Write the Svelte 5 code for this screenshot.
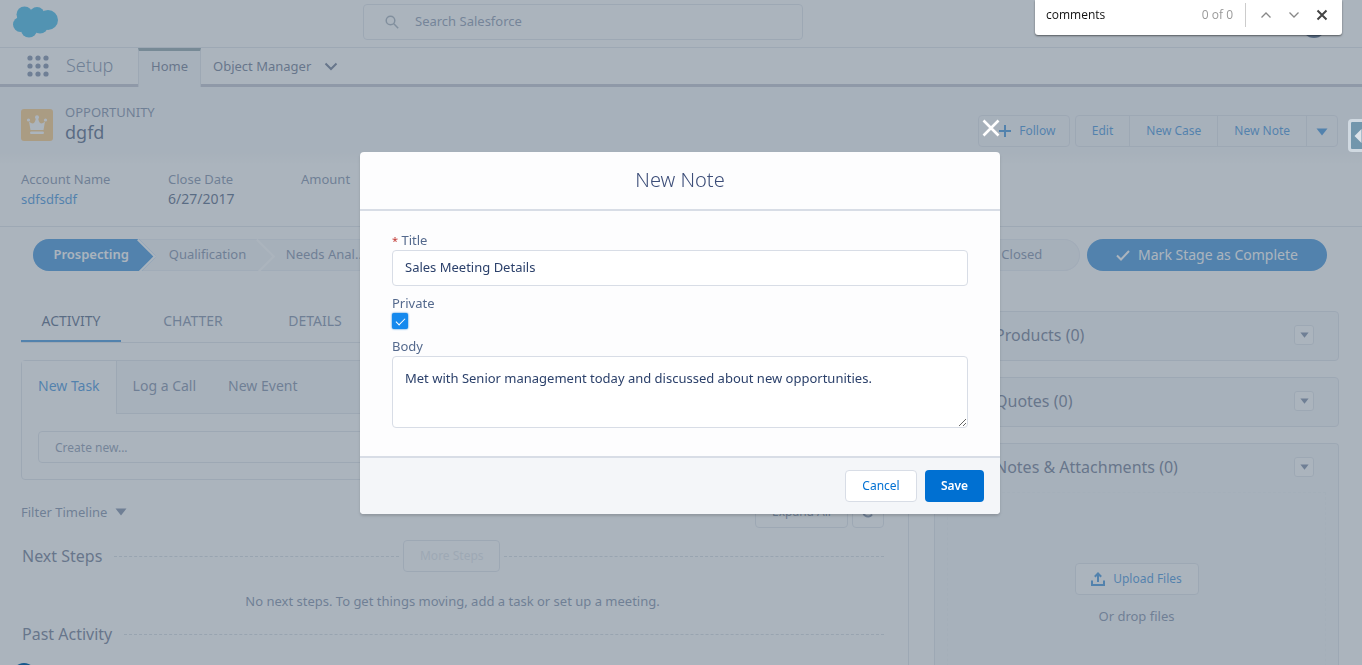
<script>
  let title = $state('Sales Meeting Details');
  let isPrivate = $state(true);
  let body = $state('Met with Senior management today and discussed about new opportunities.');
  let findText = $state('comments');

  const fields = [
    { label: 'Account Name', value: 'sdfsdfsdf', link: true },
    { label: 'Close Date', value: '6/27/2017' },
    { label: 'Amount', value: '' }
  ];
  const related = ['Products (0)', 'Quotes (0)'];
</script>

{#snippet caret()}
  <svg class="caret" viewBox="0 0 12 8" aria-hidden="true"><path d="M0.5 0.5h11L6 7.5z" /></svg>
{/snippet}

<div class="app">
  <header class="global">
    <svg class="logo" viewBox="0 0 46 32" aria-hidden="true">
      <g fill="#00a1e0">
        <circle cx="12.500" cy="8.500" r="8" /><circle cx="25" cy="8.500" r="7.500" /><circle cx="36" cy="14" r="10" />
        <circle cx="8.500" cy="18.500" r="7.500" /><circle cx="17" cy="23.500" r="8" /><circle cx="28" cy="19.500" r="8" />
        <rect x="9" y="9" width="24" height="14" />
      </g>
    </svg>
    <div class="search">
      <svg viewBox="0 0 14 14" aria-hidden="true"><circle cx="5.5" cy="5.5" r="4.3" /><path d="M8.8 8.8l4.4 4.4" /></svg>
      <input type="search" placeholder="Search Salesforce" aria-label="Search Salesforce" />
    </div>
    <span class="avatar"></span>
  </header>

  <nav class="bar">
    <button class="waffle" aria-label="App Launcher">
      <svg viewBox="0 0 22 22" aria-hidden="true">
        {#each [3, 11, 19] as y}{#each [3, 11, 19] as x}<circle cx={x} cy={y} r="2.6" />{/each}{/each}
      </svg>
    </button>
    <span class="appname">Setup</span>
    <a class="tab current" href="#home">Home</a>
    <a class="tab" href="#objects">Object Manager
      <svg viewBox="0 0 14 9" aria-hidden="true"><path d="M1.5 1.5L7 7l5.5-5.5" /></svg>
    </a>
  </nav>

  <section class="record">
    <div class="record-top">
      <span class="crown">
        <svg viewBox="0 0 22 20" aria-hidden="true">
          <path d="M3 6.5c2 2 4 2.500 5 1.500s1.500-3 2-5h2c.5 2 1 4 2 5s3 .5 5-1.500L17.500 15h-13z" />
          <circle cx="2.500" cy="5" r="1.600" /><circle cx="11" cy="2.300" r="2" /><circle cx="19.500" cy="5" r="1.600" />
          <rect x="4" y="16.500" width="14" height="2.500" rx="1.200" />
        </svg>
      </span>
      <div class="names">
        <p>OPPORTUNITY</p>
        <h1>dgfd</h1>
      </div>
      <div class="actions">
        <button class="btn follow"><svg viewBox="0 0 12 12" aria-hidden="true"><path d="M6 0v12M0 6h12" /></svg>Follow</button>
        <div class="group">
          <button>Edit</button><button>New Case</button><button>New Note</button>
          <button class="more" aria-label="More actions">{@render caret()}</button>
        </div>
      </div>
    </div>
    <dl>
      {#each fields as f}
        <div>
          <dt>{f.label}</dt>
          <dd>{#if f.link}<a href="#account">{f.value}</a>{:else}{f.value}{/if}</dd>
        </div>
      {/each}
    </dl>
  </section>

  <section class="path">
    <ol>
      <li class="active"><span>Prospecting</span></li>
      <li><span>Qualification</span></li>
      <li><span>Needs Anal..</span></li>
      <li class="rest"></li>
      <li class="last"><span>Closed</span></li>
    </ol>
    <button class="complete">
      <svg viewBox="0 0 14 11" aria-hidden="true"><path d="M1 5.500l4 4L13 1" /></svg>Mark Stage as Complete
    </button>
  </section>

  <main>
    <div class="left">
      <div class="tabs">
        <button class="on">ACTIVITY</button><button>CHATTER</button><button>DETAILS</button>
      </div>
      <div class="composer">
        <div class="kinds">
          <button class="on">New Task</button><button>Log a Call</button><button>New Event</button>
        </div>
        <input class="create" placeholder="Create new..." aria-label="Create new" />
      </div>
      <div class="filter">
        <button class="plain">Filter Timeline {@render caret()}</button>
        <button class="btn expand">Expand All</button>
        <button class="btn refresh" aria-label="Refresh">
          <svg viewBox="0 0 14 14" aria-hidden="true"><path d="M10.500 3.500A4.800 4.800 0 1 0 11 9.500M11.500 1v3.400H8.200" /></svg>
        </button>
      </div>
      <div class="line steps">
        <h2>Next Steps</h2><hr /><button class="btn dim" disabled>More Steps</button><hr />
      </div>
      <p class="none">No next steps. To get things moving, add a task or set up a meeting.</p>
      <div class="line"><h2>Past Activity</h2><hr /></div>
    </div>

    <aside>
      {#each related as name}
        <section class="card"><header><h2>{name}</h2><button aria-label="Actions">{@render caret()}</button></header></section>
      {/each}
      <section class="card files">
        <header><h2>Notes &amp; Attachments (0)</h2><button aria-label="Actions">{@render caret()}</button></header>
        <div class="drop">
          <button class="btn upload">
            <svg viewBox="0 0 14 14" aria-hidden="true"><path d="M7 10V2M3.800 4.800L7 1.500l3.200 3.300M1 8.500V13h12V8.500" /></svg>Upload Files
          </button>
          <p>Or drop files</p>
        </div>
      </section>
    </aside>
  </main>
</div>

<div class="backdrop">
  <div class="modal" role="dialog" aria-modal="true" aria-labelledby="modal-title">
    <button class="close" aria-label="Close"><svg viewBox="0 0 18 18" aria-hidden="true"><path d="M1.500 1.500l15 15M16.500 1.500l-15 15" /></svg></button>
    <header><h2 id="modal-title">New Note</h2></header>
    <form>
      <label for="note-title"><abbr>*</abbr> Title</label>
      <input id="note-title" class="text" bind:value={title} />
      <label for="note-private" class="gap">Private</label>
      <input id="note-private" type="checkbox" bind:checked={isPrivate} />
      <label for="note-body" class="gap">Body</label>
      <textarea id="note-body" bind:value={body}></textarea>
    </form>
    <footer><button class="cancel">Cancel</button><button class="save">Save</button></footer>
  </div>
</div>

<button class="side" aria-label="Open panel"><svg viewBox="0 0 10 26" aria-hidden="true"><path d="M10 6L3 13l7 7z" /></svg></button>
<span class="presence"></span>

<div class="find">
  <input bind:value={findText} aria-label="Find in page" />
  <span class="count">0 of 0</span>
  <button aria-label="Previous"><svg viewBox="0 0 12 12"><path d="M1.500 8.500L6 4l4.500 4.500" /></svg></button>
  <button aria-label="Next"><svg viewBox="0 0 12 12"><path d="M1.500 3.500L6 8l4.500-4.500" /></svg></button>
  <button class="x" aria-label="Close find bar"><svg viewBox="0 0 12 12"><path d="M1.500 1.500l9 9M10.500 1.500l-9 9" /></svg></button>
</div>

<style>
  :global(body) { overflow: hidden; font: 13px/20px "Noto Sans", "Open Sans", sans-serif; }
  * { box-sizing: border-box; }
  h1, h2, p, dl, dd, ol { margin: 0; padding: 0; font-weight: 400; }
  button, input, textarea { font: inherit; color: inherit; margin: 0; }
  button { background: none; border: 0; padding: 0; white-space: nowrap; }
  a { text-decoration: none; }
  svg { fill: none; stroke: currentColor; display: block; flex: none; }
  .caret { width: 12px; height: 8px; fill: currentColor; stroke: none; }

  .app { height: 100vh; overflow: hidden; isolation: isolate; background: #fff; color: #54698d; display: flex; flex-direction: column; }
  .global { display: grid; grid-template-columns: 339px minmax(200px, 440px) 1fr; align-items: start; height: 48px; flex: none; padding: 4px 36px 0 12px; column-gap: 12px; border-bottom: 1px solid #d8dde6; }
  .logo { width: 46px; height: 32px; margin-top: 2px; stroke: none; }
  .search { display: flex; align-items: center; gap: 16px; height: 36px; padding-left: 21px; border: 1px solid #d8dde6; border-radius: 4px; }
  .search svg { width: 14px; height: 14px; stroke: #8896a5; stroke-width: 1.500; }
  .search input { border: 0; background: none; flex: 1; outline: 0; padding: 0 0 2px; }
  ::placeholder { color: #54698d; opacity: .9; }
  .avatar { justify-self: end; width: 24px; height: 24px; margin-top: 10px; border-radius: 50%; background: #16325c; }

  .bar { display: flex; height: 39px; flex: none; border-bottom: 3px solid #b0b3c2; padding-left: 27px; }
  .waffle { width: 22px; height: 22px; align-self: center; }
  .waffle svg { fill: #54698d; stroke: none; }
  .appname { font-size: 18px; line-height: 35px; font-weight: 300; width: 89px; padding-left: 17px; }
  .tab { display: flex; align-items: center; padding: 0 12px; color: #3c4d70; }
  .tab svg { width: 14px; height: 9px; margin-left: 13px; stroke-width: 2; }
  .tab.current { height: 39px; border: 1px solid #d8dde6; border-top: 3px solid #6c8690; border-bottom: 0; background: #f4f6f9; padding-bottom: 6px; }

  .record { flex: none; height: 140px; border-bottom: 1px solid #d8dde6; padding: 15px 24px 0 21px; background: linear-gradient(#f4f6f9 66px, #fff 78px); }
  .record-top { display: flex; gap: 12px; height: 67px; }
  .crown { width: 32px; height: 32px; margin-top: 7px; border-radius: 3px; background: #fcb95b; display: grid; place-items: center; }
  .crown svg { width: 22px; height: 20px; fill: #fff; stroke: none; }
  .names { flex: 1; }
  .names h1 { font-size: 18px; line-height: 20px; color: #16325c; }
  .actions { display: flex; gap: 5px; padding-top: 13px; color: #0070d2; }
  .btn { height: 32px; border: 1px solid #d8dde6; border-radius: 4px; display: flex; align-items: center; justify-content: center; font-size: 12px; }
  .follow { width: 92px; gap: 8px; padding-left: 7px; }
  .follow svg { width: 12px; height: 12px; stroke-width: 2; }
  .group { display: flex; height: 32px; border: 1px solid #d8dde6; border-radius: 4px; font-size: 12px; }
  .group button { padding: 0 16px; }
  .group button + button { border-left: 1px solid #d8dde6; }
  .group .more { padding: 2px 9px 0; }
  dl { display: flex; }
  dl div { min-width: 133px; }
  dl div:first-child { min-width: 147px; }
  dd { color: #16325c; font-size: 14px; }
  dd a { color: #0070d2; font-size: 13px; }

  .path { display: flex; gap: 7px; padding: 12px 35px 0 33px; flex: none; }
  .path ol { display: flex; flex: 1; list-style: none; height: 32px; border-radius: 16px; overflow: hidden; background: #f1f2f7; box-shadow: inset 0 0 0 1px #e3e7ef; }
  .path li { flex: 1; display: grid; place-items: center; position: relative; padding-bottom: 2px; }
  .path li.rest { flex: 5; }
  .path li.active { background: linear-gradient(90deg, #0070d2 calc(100% - 10px), transparent 0); color: #fff; font-weight: 600; }
  .path li:not(.last, .rest)::after { content: ""; position: absolute; right: -4px; top: 5px; width: 23px; height: 23px; transform: rotate(45deg); border: solid #fff; border-width: 2px 2px 0 0; }
  .path li.active::after { background: #0070d2; right: -2px; }
  .path li.active span { position: relative; z-index: 1; }
  .complete { width: 240px; height: 32px; border-radius: 16px; background: #0070d2; color: #fff; font-size: 14px; display: flex; align-items: center; justify-content: center; gap: 8px; }
  .complete svg { width: 14px; height: 11px; stroke-width: 2; }

  main { flex: 1; min-height: 0; display: grid; grid-template-columns: minmax(0, 888fr) minmax(0, 405fr); gap: 25px; padding: 30px 23px 0 21px; }
  .left { padding-right: 24px; border-right: 1px solid #d8dde6; }
  .tabs { display: flex; gap: 22px; height: 42px; border-bottom: 1px solid #d8dde6; font-size: 14px; }
  .tabs button { min-width: 100px; height: 41px; padding-bottom: 1px; }
  .tabs .on { color: #16325c; border-bottom: 2px solid #0070d2; padding-top: 1px; padding-bottom: 0; }
  .composer { margin-top: 17px; height: 120px; border: 1px solid #d8dde6; border-radius: 4px; }
  .kinds { display: flex; height: 53px; background: #f4f6f9; border-bottom: 1px solid #d8dde6; font-size: 14px; }
  .kinds button { padding: 0 16px 2px; }
  .kinds .on { height: 53px; color: #0070d2; background: #fff; border-right: 1px solid #d8dde6; padding: 0 16px 3px; }
  .create { display: block; height: 32px; width: calc(100% - 32px); margin: 17px 16px 0; padding: 0 16px; border: 1px solid #d8dde6; border-radius: 4px; background: none; font-size: 12px; }
  .filter { display: flex; margin-top: 16px; align-items: center; gap: 4px; }
  .plain { display: flex; align-items: center; gap: 8px; margin-right: auto; }
  .expand { width: 93px; }
  .refresh { width: 32px; }
  .refresh svg { width: 14px; height: 14px; stroke-width: 2; }
  .line { display: flex; align-items: center; gap: 4px; height: 32px; }
  .line h2 { font-size: 16px; padding: 0 8px 1px 1px; color: #3c4d70; }
  .line hr { flex: 1; border: 0; border-top: 1px dashed #c9d0db; margin: 0; }
  .steps { display: grid; grid-template-columns: auto 1fr 97px 44%; margin-top: 12px; }
  .dim { color: #d8dde6; }
  .none { text-align: center; margin: 19px 0 7px; }

  aside { display: flex; flex-direction: column; gap: 16px; padding-top: 10px; min-height: 0; }
  .card { border: 1px solid #d8dde6; border-radius: 4px; background: #f4f6f9; flex: none; }
  .card header { display: flex; align-items: center; height: 48px; padding: 0 24px 2px 60px; }
  .card h2 { flex: 1; font-size: 16px; color: #3c4d70; }
  .card header button { width: 20px; height: 20px; border: 1px solid #d8dde6; border-radius: 3px; background: #fff; display: grid; place-items: center; }
  .card header .caret { width: 9px; height: 6px; }
  .files { flex: 1; border-bottom: 0; }
  .drop { margin: 0 12px; height: 220px; border: 1px dashed #eceff4; display: flex; flex-direction: column; align-items: center; gap: 11px; padding-top: 70px; }
  .upload { width: 124px; gap: 8px; background: #fff; color: #0070d2; }
  .upload svg { width: 14px; height: 14px; stroke-width: 2; }

  .backdrop { position: fixed; inset: 0; background: rgba(126, 140, 153, .65); display: flex; align-items: center; justify-content: center; padding: 1px 2px 0 0; }
  .modal { position: relative; width: 50%; max-width: 640px; background: #fdfdfe; border-radius: 4px; box-shadow: 0 2px 3px rgba(0, 0, 0, .16); color: #54698d; }
  .modal header { height: 59px; border-bottom: 2px solid #d8dde6; text-align: center; }
  .modal h2 { font-size: 20px; line-height: 56px; font-weight: 300; color: #3c4d78; }
  .close { position: absolute; right: 0; top: -33px; width: 18px; height: 18px; color: #fff; }
  .close svg { stroke-width: 2.600; }
  form { padding: 20px 32px 28px; }
  label { display: block; line-height: 19px; }
  .gap { margin-top: 8px; }
  abbr { color: #c23934; font-size: 11px; }
  .text, textarea { display: block; width: 100%; border: 1px solid #d8dde6; border-radius: 4px; background: #fff; color: #2c416b; padding: 0 12px 2px; outline: 0; }
  .text { height: 36px; }
  textarea { height: 72px; padding-top: 11px; resize: vertical; }
  input[type="checkbox"] { appearance: none; width: 16px; height: 16px; border-radius: 2px; background: #1589ee; box-shadow: 0 0 2px #0070d2; display: grid; place-items: center; }
  input[type="checkbox"]:checked::after { content: ""; width: 8px; height: 4px; border: solid #fff; border-width: 0 0 1px 1px; transform: translateY(-1px) rotate(-45deg); }
  .modal footer { display: flex; justify-content: flex-end; gap: 8px; height: 58px; padding: 12px 16px; background: #f4f6f9; border-top: 2px solid #d8dde6; border-radius: 0 0 4px 4px; font-size: 12px; }
  .modal footer button { height: 32px; border-radius: 4px; }
  .cancel { width: 72px; border: 1px solid #d8dde6; background: #fff; color: #0070d2; }
  .save { width: 59px; background: #0070d2; color: #fff; font-weight: 600; }

  .side { position: fixed; right: 0; top: 119px; width: 14px; height: 33px; border: 3px solid #d0d9e1; border-right: 0; border-radius: 4px 0 0 4px; background: #7296ac; }
  .side svg { width: 11px; height: 26px; fill: #dce3e9; stroke: none; }
  .presence { position: fixed; left: 12px; bottom: -22px; width: 24px; height: 24px; border-radius: 50%; background: #16598c; }
  .find { position: fixed; top: 0; right: 20px; width: 307px; height: 35px; display: flex; align-items: center; padding: 0 14px 5px 11px; background: #fff; border-radius: 0 0 3px 3px; box-shadow: 0 1px 2px rgba(0, 0, 0, .5); font: 12px/20px "Open Sans", sans-serif; color: #111; }
  .find input { flex: 1; min-width: 0; border: 0; padding: 0; outline: 0; }
  .count { color: #999; padding-right: 12px; border-right: 1px solid #ccc; line-height: 24px; }
  .find button { color: #888; width: 12px; margin-left: 16px; }
  .find .count + button { margin-left: 14px; }
  .find svg { width: 12px; height: 12px; stroke-width: 1.300; }
  .find .x { color: #444; }
  .find .x svg { stroke-width: 2; }
</style>
